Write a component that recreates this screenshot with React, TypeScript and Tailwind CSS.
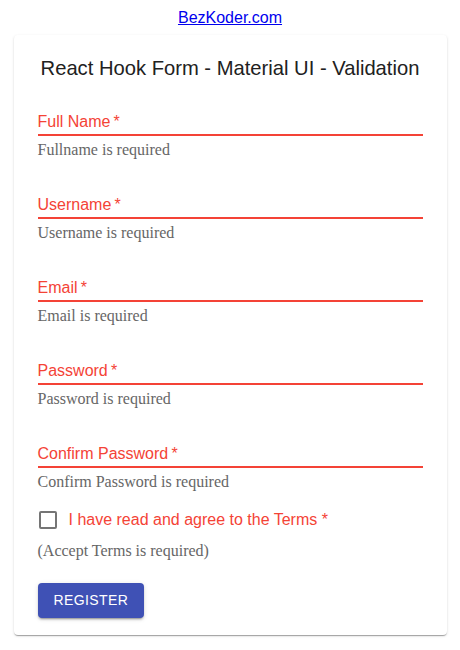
import React from "react";

const fields = [
  { label: "Full Name", error: "Fullname is required" },
  { label: "Username", error: "Username is required" },
  { label: "Email", error: "Email is required" },
  { label: "Password", error: "Password is required" },
  { label: "Confirm Password", error: "Confirm Password is required" },
];

const Field = ({ label, error, first }: { label: string; error: string; first?: boolean }) => (
  <div className={first ? "mt-[32px]" : "mt-[36px]"}>
    <div className="text-[16px] leading-[19px] text-[#f44336] font-['Liberation_Sans',Arial,sans-serif]">
      {label}
      {"\u2009*"}
    </div>
    <div className="mt-[3px] h-[2px] bg-[#f44336]" />
    <div className="mt-[4px] text-[16px] leading-[19px] text-[#666666] font-['Liberation_Serif','Times_New_Roman',serif]">
      {error}
    </div>
  </div>
);

export default function App() {
  return (
    <div className="min-h-[650px] bg-white font-['Liberation_Sans',Arial,sans-serif]">
      <div className="pt-[9px] text-center text-[16px] leading-[18px]">
        <a href="#" className="text-[#0000ee] underline">
          BezKoder.com
        </a>
      </div>
      <div className="mx-auto mt-[8px] w-[433px] rounded-[4px] bg-white px-[24px] pt-[21px] pb-[17px] shadow-[0_2px_1px_-1px_rgba(0,0,0,0.2),0_1px_1px_0_rgba(0,0,0,0.14),0_1px_3px_0_rgba(0,0,0,0.12)]">
        <h2 className="text-center text-[20.2px] leading-[24px] text-[#212121]">
          React Hook Form - Material UI - Validation
        </h2>
        {fields.map((f, i) => (
          <Field key={f.label} label={f.label} error={f.error} first={i === 0} />
        ))}
        <div className="mt-[19px] flex h-[19px] items-center">
          <div className="ml-[1px] h-[18px] w-[18px] rounded-[2px] border-2 border-[#757575]" />
          <span className="ml-[12px] text-[16px] leading-[19px] text-[#f44336]">
            I have read and agree to the Terms *
          </span>
        </div>
        <div className="mt-[12px] text-[16px] leading-[19px] text-[#666666] font-['Liberation_Serif','Times_New_Roman',serif]">
          (Accept Terms is required)
        </div>
        <button className="mt-[23px] h-[35px] rounded-[4px] bg-[#3f51b5] px-[16px] text-[14px] leading-[35px] tracking-[0.4px] text-white uppercase shadow-[0_3px_1px_-2px_rgba(0,0,0,0.2),0_2px_2px_0_rgba(0,0,0,0.14),0_1px_5px_0_rgba(0,0,0,0.12)]">
          Register
        </button>
      </div>
    </div>
  );
}
